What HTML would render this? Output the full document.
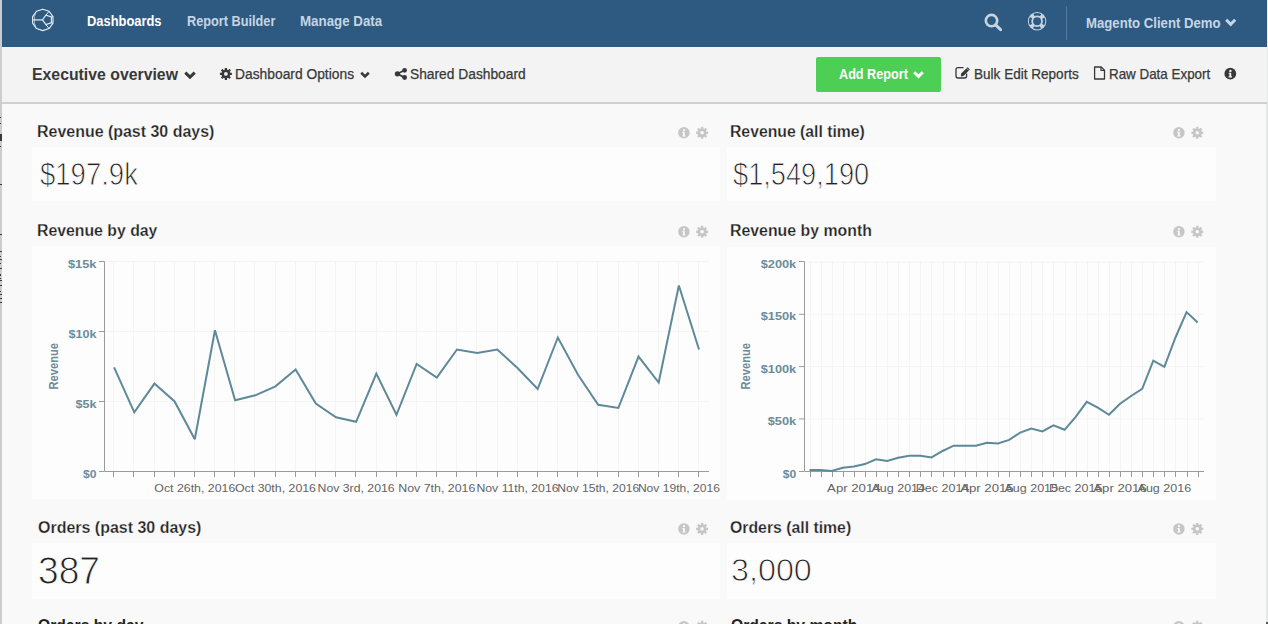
<!DOCTYPE html>
<html><head><meta charset="utf-8">
<style>
html,body{margin:0;padding:0}
body{width:1268px;height:624px;overflow:hidden;position:relative;background:#f9f9f9;font-family:"Liberation Sans",sans-serif}
.a{position:absolute}
.t{position:absolute;white-space:nowrap;font-family:"Liberation Sans",sans-serif;transform-origin:0 0}
svg{position:absolute;left:0;top:0}
svg text{font-family:"Liberation Sans",sans-serif}
</style></head>
<body>
<div class="a" style="left:0;top:0;width:2px;height:624px;background:#cdcdcd"></div>
<div class="a" style="left:1266px;top:47px;width:2px;height:577px;background:#e7e8e8"></div>
<div class="a" style="left:1267px;top:0;width:1px;height:47px;background:#e9eef0"></div>
<div class="a" style="left:0;top:117px;width:1px;height:1px;background:#3a3a3a"></div>
<div class="a" style="left:0;top:123px;width:1px;height:1px;background:#3a3a3a"></div>
<div class="a" style="left:0;top:134px;width:2px;height:7px;background:#3a3a3a"></div>
<div class="a" style="left:0;top:146px;width:1px;height:1px;background:#3a3a3a"></div>
<div class="a" style="left:0;top:183.5px;width:2px;height:1.2px;background:#3a3a3a"></div>
<div class="a" style="left:0;top:233.5px;width:2px;height:1.2px;background:#3a3a3a"></div>
<div class="a" style="left:0;top:251px;width:2px;height:1px;background:#3a3a3a"></div>
<div class="a" style="left:0;top:256px;width:1px;height:1px;background:#3a3a3a"></div>
<div class="a" style="left:0;top:259px;width:2px;height:1px;background:#3a3a3a"></div>
<div class="a" style="left:0;top:263px;width:1px;height:1px;background:#3a3a3a"></div>
<div class="a" style="left:0;top:268px;width:2px;height:1px;background:#3a3a3a"></div>
<div class="a" style="left:0;top:274px;width:1px;height:1.5px;background:#3a3a3a"></div>
<div class="a" style="left:0;top:278px;width:1px;height:1px;background:#3a3a3a"></div>
<div class="a" style="left:0;top:280px;width:2px;height:1px;background:#3a3a3a"></div>
<div class="a" style="left:0;top:285px;width:2px;height:1px;background:#3a3a3a"></div>
<div class="a" style="left:0;top:290.5px;width:1px;height:1px;background:#3a3a3a"></div>
<div class="a" style="left:0;top:294px;width:2px;height:1px;background:#3a3a3a"></div>
<div class="a" style="left:0;top:297.5px;width:2px;height:1px;background:#3a3a3a"></div>
<div class="a" style="left:0;top:302px;width:2px;height:1px;background:#3a3a3a"></div>
<div class="a" style="left:1266px;top:622px;width:2px;height:2px;background:#555"></div>
<div class="a" style="left:2px;top:0;width:1265px;height:47px;background:#2e5a82"></div>
<div class="a" style="left:1066px;top:6px;width:1px;height:34px;background:#52789b"></div>
<div class="a" style="left:2px;top:47px;width:1265px;height:55px;background:#f3f3f3"></div>
<div class="a" style="left:2px;top:102px;width:1265px;height:2px;background:#cfcfcf"></div>
<div class="a" style="left:816px;top:57px;width:125px;height:35px;background:#4dce55;border-radius:2px"></div>
<div class="a" style="left:32px;top:147px;width:688px;height:54px;background:#fdfdfd"></div>
<div class="a" style="left:727px;top:147px;width:489px;height:54px;background:#fdfdfd"></div>
<div class="a" style="left:32px;top:246px;width:688px;height:253px;background:#fdfdfd"></div>
<div class="a" style="left:727px;top:247px;width:489px;height:253px;background:#fdfdfd"></div>
<div class="a" style="left:32px;top:543px;width:688px;height:56px;background:#fdfdfd"></div>
<div class="a" style="left:727px;top:543px;width:489px;height:56px;background:#fdfdfd"></div>
<svg width="1268" height="624" viewBox="0 0 1268 624">
<line x1="113.5" y1="261" x2="113.5" y2="471" stroke="#f4f4f4" stroke-width="1"/>
<line x1="133.5" y1="261" x2="133.5" y2="471" stroke="#f4f4f4" stroke-width="1"/>
<line x1="154.5" y1="261" x2="154.5" y2="471" stroke="#f4f4f4" stroke-width="1"/>
<line x1="174.5" y1="261" x2="174.5" y2="471" stroke="#f4f4f4" stroke-width="1"/>
<line x1="194.5" y1="261" x2="194.5" y2="471" stroke="#f4f4f4" stroke-width="1"/>
<line x1="214.5" y1="261" x2="214.5" y2="471" stroke="#f4f4f4" stroke-width="1"/>
<line x1="234.5" y1="261" x2="234.5" y2="471" stroke="#f4f4f4" stroke-width="1"/>
<line x1="254.5" y1="261" x2="254.5" y2="471" stroke="#f4f4f4" stroke-width="1"/>
<line x1="275.5" y1="261" x2="275.5" y2="471" stroke="#f4f4f4" stroke-width="1"/>
<line x1="295.5" y1="261" x2="295.5" y2="471" stroke="#f4f4f4" stroke-width="1"/>
<line x1="315.5" y1="261" x2="315.5" y2="471" stroke="#f4f4f4" stroke-width="1"/>
<line x1="335.5" y1="261" x2="335.5" y2="471" stroke="#f4f4f4" stroke-width="1"/>
<line x1="355.5" y1="261" x2="355.5" y2="471" stroke="#f4f4f4" stroke-width="1"/>
<line x1="376.5" y1="261" x2="376.5" y2="471" stroke="#f4f4f4" stroke-width="1"/>
<line x1="396.5" y1="261" x2="396.5" y2="471" stroke="#f4f4f4" stroke-width="1"/>
<line x1="416.5" y1="261" x2="416.5" y2="471" stroke="#f4f4f4" stroke-width="1"/>
<line x1="436.5" y1="261" x2="436.5" y2="471" stroke="#f4f4f4" stroke-width="1"/>
<line x1="456.5" y1="261" x2="456.5" y2="471" stroke="#f4f4f4" stroke-width="1"/>
<line x1="476.5" y1="261" x2="476.5" y2="471" stroke="#f4f4f4" stroke-width="1"/>
<line x1="497.5" y1="261" x2="497.5" y2="471" stroke="#f4f4f4" stroke-width="1"/>
<line x1="517.5" y1="261" x2="517.5" y2="471" stroke="#f4f4f4" stroke-width="1"/>
<line x1="537.5" y1="261" x2="537.5" y2="471" stroke="#f4f4f4" stroke-width="1"/>
<line x1="557.5" y1="261" x2="557.5" y2="471" stroke="#f4f4f4" stroke-width="1"/>
<line x1="577.5" y1="261" x2="577.5" y2="471" stroke="#f4f4f4" stroke-width="1"/>
<line x1="597.5" y1="261" x2="597.5" y2="471" stroke="#f4f4f4" stroke-width="1"/>
<line x1="618.5" y1="261" x2="618.5" y2="471" stroke="#f4f4f4" stroke-width="1"/>
<line x1="638.5" y1="261" x2="638.5" y2="471" stroke="#f4f4f4" stroke-width="1"/>
<line x1="658.5" y1="261" x2="658.5" y2="471" stroke="#f4f4f4" stroke-width="1"/>
<line x1="678.5" y1="261" x2="678.5" y2="471" stroke="#f4f4f4" stroke-width="1"/>
<line x1="698.5" y1="261" x2="698.5" y2="471" stroke="#f4f4f4" stroke-width="1"/>
<line x1="104" y1="261.5" x2="709" y2="261.5" stroke="#f4f4f4" stroke-width="1"/>
<line x1="104" y1="331.5" x2="709" y2="331.5" stroke="#f4f4f4" stroke-width="1"/>
<line x1="104" y1="401.5" x2="709" y2="401.5" stroke="#f4f4f4" stroke-width="1"/>
<path d="M99,261.5 H104.5 V471.5 H709" fill="none" stroke="#9a9a9a" stroke-width="1"/>
<line x1="99" y1="331.5" x2="104" y2="331.5" stroke="#9a9a9a" stroke-width="1"/>
<line x1="99" y1="401.5" x2="104" y2="401.5" stroke="#9a9a9a" stroke-width="1"/>
<line x1="99" y1="471.5" x2="104" y2="471.5" stroke="#9a9a9a" stroke-width="1"/>
<line x1="113.5" y1="471" x2="113.5" y2="477" stroke="#9a9a9a" stroke-width="1"/>
<line x1="133.5" y1="471" x2="133.5" y2="477" stroke="#9a9a9a" stroke-width="1"/>
<line x1="154.5" y1="471" x2="154.5" y2="477" stroke="#9a9a9a" stroke-width="1"/>
<line x1="174.5" y1="471" x2="174.5" y2="477" stroke="#9a9a9a" stroke-width="1"/>
<line x1="194.5" y1="471" x2="194.5" y2="477" stroke="#9a9a9a" stroke-width="1"/>
<line x1="214.5" y1="471" x2="214.5" y2="477" stroke="#9a9a9a" stroke-width="1"/>
<line x1="234.5" y1="471" x2="234.5" y2="477" stroke="#9a9a9a" stroke-width="1"/>
<line x1="254.5" y1="471" x2="254.5" y2="477" stroke="#9a9a9a" stroke-width="1"/>
<line x1="275.5" y1="471" x2="275.5" y2="477" stroke="#9a9a9a" stroke-width="1"/>
<line x1="295.5" y1="471" x2="295.5" y2="477" stroke="#9a9a9a" stroke-width="1"/>
<line x1="315.5" y1="471" x2="315.5" y2="477" stroke="#9a9a9a" stroke-width="1"/>
<line x1="335.5" y1="471" x2="335.5" y2="477" stroke="#9a9a9a" stroke-width="1"/>
<line x1="355.5" y1="471" x2="355.5" y2="477" stroke="#9a9a9a" stroke-width="1"/>
<line x1="376.5" y1="471" x2="376.5" y2="477" stroke="#9a9a9a" stroke-width="1"/>
<line x1="396.5" y1="471" x2="396.5" y2="477" stroke="#9a9a9a" stroke-width="1"/>
<line x1="416.5" y1="471" x2="416.5" y2="477" stroke="#9a9a9a" stroke-width="1"/>
<line x1="436.5" y1="471" x2="436.5" y2="477" stroke="#9a9a9a" stroke-width="1"/>
<line x1="456.5" y1="471" x2="456.5" y2="477" stroke="#9a9a9a" stroke-width="1"/>
<line x1="476.5" y1="471" x2="476.5" y2="477" stroke="#9a9a9a" stroke-width="1"/>
<line x1="497.5" y1="471" x2="497.5" y2="477" stroke="#9a9a9a" stroke-width="1"/>
<line x1="517.5" y1="471" x2="517.5" y2="477" stroke="#9a9a9a" stroke-width="1"/>
<line x1="537.5" y1="471" x2="537.5" y2="477" stroke="#9a9a9a" stroke-width="1"/>
<line x1="557.5" y1="471" x2="557.5" y2="477" stroke="#9a9a9a" stroke-width="1"/>
<line x1="577.5" y1="471" x2="577.5" y2="477" stroke="#9a9a9a" stroke-width="1"/>
<line x1="597.5" y1="471" x2="597.5" y2="477" stroke="#9a9a9a" stroke-width="1"/>
<line x1="618.5" y1="471" x2="618.5" y2="477" stroke="#9a9a9a" stroke-width="1"/>
<line x1="638.5" y1="471" x2="638.5" y2="477" stroke="#9a9a9a" stroke-width="1"/>
<line x1="658.5" y1="471" x2="658.5" y2="477" stroke="#9a9a9a" stroke-width="1"/>
<line x1="678.5" y1="471" x2="678.5" y2="477" stroke="#9a9a9a" stroke-width="1"/>
<line x1="698.5" y1="471" x2="698.5" y2="477" stroke="#9a9a9a" stroke-width="1"/>
<text x="96.5" y="267.5" text-anchor="end" font-size="11.5" font-weight="bold" fill="#6a8c9b" textLength="28.5" lengthAdjust="spacingAndGlyphs">$15k</text>
<text x="96.5" y="337.5" text-anchor="end" font-size="11.5" font-weight="bold" fill="#6a8c9b" textLength="28" lengthAdjust="spacingAndGlyphs">$10k</text>
<text x="96.5" y="407.5" text-anchor="end" font-size="11.5" font-weight="bold" fill="#6a8c9b" textLength="21" lengthAdjust="spacingAndGlyphs">$5k</text>
<text x="96.5" y="477.5" text-anchor="end" font-size="11.5" font-weight="bold" fill="#6a8c9b" textLength="13.5" lengthAdjust="spacingAndGlyphs">$0</text>
<text x="154.3" y="491.7" font-size="11" fill="#646464" textLength="81" lengthAdjust="spacingAndGlyphs">Oct 26th, 2016</text>
<text x="235.0" y="491.7" font-size="11" fill="#646464" textLength="81" lengthAdjust="spacingAndGlyphs">Oct 30th, 2016</text>
<text x="317.6" y="491.7" font-size="11" fill="#646464" textLength="77" lengthAdjust="spacingAndGlyphs">Nov 3rd, 2016</text>
<text x="398.3" y="491.7" font-size="11" fill="#646464" textLength="77" lengthAdjust="spacingAndGlyphs">Nov 7th, 2016</text>
<text x="476.5" y="491.7" font-size="11" fill="#646464" textLength="82" lengthAdjust="spacingAndGlyphs">Nov 11th, 2016</text>
<text x="557.2" y="491.7" font-size="11" fill="#646464" textLength="82" lengthAdjust="spacingAndGlyphs">Nov 15th, 2016</text>
<text x="637.9" y="491.7" font-size="11" fill="#646464" textLength="82" lengthAdjust="spacingAndGlyphs">Nov 19th, 2016</text>
<text x="0" y="0" transform="translate(57.6,366.2) rotate(-90)" text-anchor="middle" font-size="12.5" font-weight="bold" fill="#6a8c9b" textLength="46.5" lengthAdjust="spacingAndGlyphs">Revenue</text>
<polyline points="114.10,367.40 134.27,412.30 154.44,383.60 174.61,401.50 194.78,439.20 214.95,330.30 235.12,400.20 255.29,395.30 275.46,386.30 295.63,369.50 315.80,403.60 335.97,417.30 356.14,421.80 376.31,373.60 396.48,414.80 416.65,364.00 436.82,377.60 456.99,349.50 477.16,353.00 497.33,349.50 517.50,368.00 537.67,389.00 557.84,337.50 578.01,374.80 598.18,404.80 618.35,408.00 638.52,356.60 658.69,382.50 678.86,285.50 699.03,349.50" fill="none" stroke="#5e8999" stroke-width="2.0" stroke-linejoin="miter" stroke-miterlimit="3"/>
<line x1="810.5" y1="261" x2="810.5" y2="471" stroke="#f4f4f4" stroke-width="1"/>
<line x1="821.5" y1="261" x2="821.5" y2="471" stroke="#f4f4f4" stroke-width="1"/>
<line x1="832.5" y1="261" x2="832.5" y2="471" stroke="#f4f4f4" stroke-width="1"/>
<line x1="843.5" y1="261" x2="843.5" y2="471" stroke="#f4f4f4" stroke-width="1"/>
<line x1="854.5" y1="261" x2="854.5" y2="471" stroke="#f4f4f4" stroke-width="1"/>
<line x1="865.5" y1="261" x2="865.5" y2="471" stroke="#f4f4f4" stroke-width="1"/>
<line x1="876.5" y1="261" x2="876.5" y2="471" stroke="#f4f4f4" stroke-width="1"/>
<line x1="887.5" y1="261" x2="887.5" y2="471" stroke="#f4f4f4" stroke-width="1"/>
<line x1="898.5" y1="261" x2="898.5" y2="471" stroke="#f4f4f4" stroke-width="1"/>
<line x1="909.5" y1="261" x2="909.5" y2="471" stroke="#f4f4f4" stroke-width="1"/>
<line x1="920.5" y1="261" x2="920.5" y2="471" stroke="#f4f4f4" stroke-width="1"/>
<line x1="931.5" y1="261" x2="931.5" y2="471" stroke="#f4f4f4" stroke-width="1"/>
<line x1="943.5" y1="261" x2="943.5" y2="471" stroke="#f4f4f4" stroke-width="1"/>
<line x1="954.5" y1="261" x2="954.5" y2="471" stroke="#f4f4f4" stroke-width="1"/>
<line x1="965.5" y1="261" x2="965.5" y2="471" stroke="#f4f4f4" stroke-width="1"/>
<line x1="976.5" y1="261" x2="976.5" y2="471" stroke="#f4f4f4" stroke-width="1"/>
<line x1="987.5" y1="261" x2="987.5" y2="471" stroke="#f4f4f4" stroke-width="1"/>
<line x1="998.5" y1="261" x2="998.5" y2="471" stroke="#f4f4f4" stroke-width="1"/>
<line x1="1009.5" y1="261" x2="1009.5" y2="471" stroke="#f4f4f4" stroke-width="1"/>
<line x1="1020.5" y1="261" x2="1020.5" y2="471" stroke="#f4f4f4" stroke-width="1"/>
<line x1="1031.5" y1="261" x2="1031.5" y2="471" stroke="#f4f4f4" stroke-width="1"/>
<line x1="1042.5" y1="261" x2="1042.5" y2="471" stroke="#f4f4f4" stroke-width="1"/>
<line x1="1053.5" y1="261" x2="1053.5" y2="471" stroke="#f4f4f4" stroke-width="1"/>
<line x1="1065.5" y1="261" x2="1065.5" y2="471" stroke="#f4f4f4" stroke-width="1"/>
<line x1="1076.5" y1="261" x2="1076.5" y2="471" stroke="#f4f4f4" stroke-width="1"/>
<line x1="1087.5" y1="261" x2="1087.5" y2="471" stroke="#f4f4f4" stroke-width="1"/>
<line x1="1098.5" y1="261" x2="1098.5" y2="471" stroke="#f4f4f4" stroke-width="1"/>
<line x1="1109.5" y1="261" x2="1109.5" y2="471" stroke="#f4f4f4" stroke-width="1"/>
<line x1="1120.5" y1="261" x2="1120.5" y2="471" stroke="#f4f4f4" stroke-width="1"/>
<line x1="1131.5" y1="261" x2="1131.5" y2="471" stroke="#f4f4f4" stroke-width="1"/>
<line x1="1142.5" y1="261" x2="1142.5" y2="471" stroke="#f4f4f4" stroke-width="1"/>
<line x1="1153.5" y1="261" x2="1153.5" y2="471" stroke="#f4f4f4" stroke-width="1"/>
<line x1="1164.5" y1="261" x2="1164.5" y2="471" stroke="#f4f4f4" stroke-width="1"/>
<line x1="1175.5" y1="261" x2="1175.5" y2="471" stroke="#f4f4f4" stroke-width="1"/>
<line x1="1187.5" y1="261" x2="1187.5" y2="471" stroke="#f4f4f4" stroke-width="1"/>
<line x1="1198.5" y1="261" x2="1198.5" y2="471" stroke="#f4f4f4" stroke-width="1"/>
<line x1="804" y1="262.0" x2="1204" y2="262.0" stroke="#f4f4f4" stroke-width="1"/>
<line x1="804" y1="314.3" x2="1204" y2="314.3" stroke="#f4f4f4" stroke-width="1"/>
<line x1="804" y1="366.6" x2="1204" y2="366.6" stroke="#f4f4f4" stroke-width="1"/>
<line x1="804" y1="418.9" x2="1204" y2="418.9" stroke="#f4f4f4" stroke-width="1"/>
<path d="M799,261.5 H804.5 V471.5 H1204" fill="none" stroke="#9a9a9a" stroke-width="1"/>
<line x1="799" y1="314.3" x2="804" y2="314.3" stroke="#9a9a9a" stroke-width="1"/>
<line x1="799" y1="366.6" x2="804" y2="366.6" stroke="#9a9a9a" stroke-width="1"/>
<line x1="799" y1="418.9" x2="804" y2="418.9" stroke="#9a9a9a" stroke-width="1"/>
<line x1="799" y1="471.5" x2="804" y2="471.5" stroke="#9a9a9a" stroke-width="1"/>
<line x1="810.5" y1="471" x2="810.5" y2="477" stroke="#9a9a9a" stroke-width="1"/>
<line x1="821.5" y1="471" x2="821.5" y2="477" stroke="#9a9a9a" stroke-width="1"/>
<line x1="832.5" y1="471" x2="832.5" y2="477" stroke="#9a9a9a" stroke-width="1"/>
<line x1="843.5" y1="471" x2="843.5" y2="477" stroke="#9a9a9a" stroke-width="1"/>
<line x1="854.5" y1="471" x2="854.5" y2="477" stroke="#9a9a9a" stroke-width="1"/>
<line x1="865.5" y1="471" x2="865.5" y2="477" stroke="#9a9a9a" stroke-width="1"/>
<line x1="876.5" y1="471" x2="876.5" y2="477" stroke="#9a9a9a" stroke-width="1"/>
<line x1="887.5" y1="471" x2="887.5" y2="477" stroke="#9a9a9a" stroke-width="1"/>
<line x1="898.5" y1="471" x2="898.5" y2="477" stroke="#9a9a9a" stroke-width="1"/>
<line x1="909.5" y1="471" x2="909.5" y2="477" stroke="#9a9a9a" stroke-width="1"/>
<line x1="920.5" y1="471" x2="920.5" y2="477" stroke="#9a9a9a" stroke-width="1"/>
<line x1="931.5" y1="471" x2="931.5" y2="477" stroke="#9a9a9a" stroke-width="1"/>
<line x1="943.5" y1="471" x2="943.5" y2="477" stroke="#9a9a9a" stroke-width="1"/>
<line x1="954.5" y1="471" x2="954.5" y2="477" stroke="#9a9a9a" stroke-width="1"/>
<line x1="965.5" y1="471" x2="965.5" y2="477" stroke="#9a9a9a" stroke-width="1"/>
<line x1="976.5" y1="471" x2="976.5" y2="477" stroke="#9a9a9a" stroke-width="1"/>
<line x1="987.5" y1="471" x2="987.5" y2="477" stroke="#9a9a9a" stroke-width="1"/>
<line x1="998.5" y1="471" x2="998.5" y2="477" stroke="#9a9a9a" stroke-width="1"/>
<line x1="1009.5" y1="471" x2="1009.5" y2="477" stroke="#9a9a9a" stroke-width="1"/>
<line x1="1020.5" y1="471" x2="1020.5" y2="477" stroke="#9a9a9a" stroke-width="1"/>
<line x1="1031.5" y1="471" x2="1031.5" y2="477" stroke="#9a9a9a" stroke-width="1"/>
<line x1="1042.5" y1="471" x2="1042.5" y2="477" stroke="#9a9a9a" stroke-width="1"/>
<line x1="1053.5" y1="471" x2="1053.5" y2="477" stroke="#9a9a9a" stroke-width="1"/>
<line x1="1065.5" y1="471" x2="1065.5" y2="477" stroke="#9a9a9a" stroke-width="1"/>
<line x1="1076.5" y1="471" x2="1076.5" y2="477" stroke="#9a9a9a" stroke-width="1"/>
<line x1="1087.5" y1="471" x2="1087.5" y2="477" stroke="#9a9a9a" stroke-width="1"/>
<line x1="1098.5" y1="471" x2="1098.5" y2="477" stroke="#9a9a9a" stroke-width="1"/>
<line x1="1109.5" y1="471" x2="1109.5" y2="477" stroke="#9a9a9a" stroke-width="1"/>
<line x1="1120.5" y1="471" x2="1120.5" y2="477" stroke="#9a9a9a" stroke-width="1"/>
<line x1="1131.5" y1="471" x2="1131.5" y2="477" stroke="#9a9a9a" stroke-width="1"/>
<line x1="1142.5" y1="471" x2="1142.5" y2="477" stroke="#9a9a9a" stroke-width="1"/>
<line x1="1153.5" y1="471" x2="1153.5" y2="477" stroke="#9a9a9a" stroke-width="1"/>
<line x1="1164.5" y1="471" x2="1164.5" y2="477" stroke="#9a9a9a" stroke-width="1"/>
<line x1="1175.5" y1="471" x2="1175.5" y2="477" stroke="#9a9a9a" stroke-width="1"/>
<line x1="1187.5" y1="471" x2="1187.5" y2="477" stroke="#9a9a9a" stroke-width="1"/>
<line x1="1198.5" y1="471" x2="1198.5" y2="477" stroke="#9a9a9a" stroke-width="1"/>
<text x="796.2" y="268.0" text-anchor="end" font-size="11.5" font-weight="bold" fill="#6a8c9b" textLength="35.5" lengthAdjust="spacingAndGlyphs">$200k</text>
<text x="796.2" y="320.3" text-anchor="end" font-size="11.5" font-weight="bold" fill="#6a8c9b" textLength="35.5" lengthAdjust="spacingAndGlyphs">$150k</text>
<text x="796.2" y="372.6" text-anchor="end" font-size="11.5" font-weight="bold" fill="#6a8c9b" textLength="35.5" lengthAdjust="spacingAndGlyphs">$100k</text>
<text x="796.2" y="424.9" text-anchor="end" font-size="11.5" font-weight="bold" fill="#6a8c9b" textLength="28.5" lengthAdjust="spacingAndGlyphs">$50k</text>
<text x="796.2" y="477.5" text-anchor="end" font-size="11.5" font-weight="bold" fill="#6a8c9b" textLength="13.5" lengthAdjust="spacingAndGlyphs">$0</text>
<text x="827.1" y="491.7" font-size="11" fill="#646464" textLength="53.5" lengthAdjust="spacingAndGlyphs">Apr 2014</text>
<text x="871.5" y="491.7" font-size="11" fill="#646464" textLength="53.5" lengthAdjust="spacingAndGlyphs">Aug 2014</text>
<text x="915.8" y="491.7" font-size="11" fill="#646464" textLength="53.5" lengthAdjust="spacingAndGlyphs">Dec 2014</text>
<text x="960.2" y="491.7" font-size="11" fill="#646464" textLength="53.5" lengthAdjust="spacingAndGlyphs">Apr 2015</text>
<text x="1004.5" y="491.7" font-size="11" fill="#646464" textLength="53.5" lengthAdjust="spacingAndGlyphs">Aug 2015</text>
<text x="1048.9" y="491.7" font-size="11" fill="#646464" textLength="53.5" lengthAdjust="spacingAndGlyphs">Dec 2015</text>
<text x="1093.3" y="491.7" font-size="11" fill="#646464" textLength="53.5" lengthAdjust="spacingAndGlyphs">Apr 2016</text>
<text x="1137.6" y="491.7" font-size="11" fill="#646464" textLength="53.5" lengthAdjust="spacingAndGlyphs">Aug 2016</text>
<text x="0" y="0" transform="translate(750.4,366.2) rotate(-90)" text-anchor="middle" font-size="12.5" font-weight="bold" fill="#6a8c9b" textLength="46.5" lengthAdjust="spacingAndGlyphs">Revenue</text>
<polyline points="809.50,470.10 820.59,470.10 831.68,471.00 842.77,467.80 853.86,466.50 864.95,464.10 876.04,459.30 887.13,460.90 898.22,457.70 909.31,455.80 920.40,455.80 931.49,457.40 942.58,451.00 953.67,445.70 964.76,445.70 975.85,445.70 986.94,442.80 998.03,443.40 1009.12,439.90 1020.21,432.60 1031.30,428.60 1042.39,431.50 1053.48,425.40 1064.57,429.80 1075.66,416.80 1086.75,401.80 1097.84,407.60 1108.93,414.80 1120.02,403.80 1131.11,396.00 1142.20,388.80 1153.29,360.60 1164.38,366.90 1175.47,337.50 1186.56,312.10 1197.65,322.50" fill="none" stroke="#5e8999" stroke-width="2.0" stroke-linejoin="miter" stroke-miterlimit="3"/>
<polygon points="42.80,9.20 49.09,11.24 52.98,16.59 52.98,23.21 49.09,28.56 42.80,30.60 36.51,28.56 32.62,23.21 32.62,16.59 36.51,11.24" fill="none" stroke="#e6eef5" stroke-width="1.15" stroke-linejoin="round"/>
<polygon points="42.50,19.90 45.89,15.24 51.36,17.02 51.36,22.78 45.89,24.56" fill="none" stroke="#e6eef5" stroke-width="1.1"/>
<line x1="33.13" y1="19.9" x2="42.50" y2="19.9" stroke="#e6eef5" stroke-width="1.2"/>
<line x1="45.89" y1="15.24" x2="49.09" y2="11.24" stroke="#e6eef5" stroke-width="1"/>
<line x1="51.36" y1="17.02" x2="52.98" y2="16.59" stroke="#e6eef5" stroke-width="1"/>
<line x1="51.36" y1="22.78" x2="52.98" y2="23.21" stroke="#e6eef5" stroke-width="1"/>
<line x1="45.89" y1="24.56" x2="49.09" y2="28.56" stroke="#e6eef5" stroke-width="1"/>
<path d="M35.6,13.4 L34.4,16.6 L34.4,23.2 L35.6,26.4" fill="none" stroke="#e6eef5" stroke-width="0.8" opacity="0.8"/>
<circle cx="991.5" cy="20.6" r="5.7" fill="none" stroke="#c6d5e3" stroke-width="2.6"/>
<line x1="995.6" y1="24.9" x2="1000.6" y2="29.6" stroke="#c6d5e3" stroke-width="3" stroke-linecap="round"/>
<circle cx="1037.1" cy="21.2" r="6.6" fill="none" stroke="#c6d5e3" stroke-width="5.3"/>
<circle cx="1037.1" cy="21.2" r="7.0" fill="none" stroke="#2e5a82" stroke-width="2.5" stroke-dasharray="7.09 3.91" stroke-dashoffset="3.54"/>
<polyline points="1226.2,19.8 1230.7,24.3 1235.2,19.8" fill="none" stroke="#c6d5e3" stroke-width="3"/>
<polyline points="185.3,72.7 190,77.1 194.7,72.7" fill="none" stroke="#383838" stroke-width="3"/>
<polyline points="361.2,72.8 365,76.4 368.8,72.8" fill="none" stroke="#383838" stroke-width="2.6"/>
<polyline points="914.2,72.3 918.5,76.4 922.8,72.3" fill="none" stroke="#ffffff" stroke-width="2.9"/>
<path d="M229.97,72.22 L230.17,72.83 L231.88,72.71 L231.88,75.09 L230.17,74.97 L229.97,75.58 L229.67,76.16 L230.97,77.29 L229.29,78.97 L228.16,77.67 L227.58,77.97 L226.97,78.17 L227.09,79.88 L224.71,79.88 L224.83,78.17 L224.22,77.97 L223.64,77.67 L222.51,78.97 L220.83,77.29 L222.13,76.16 L221.83,75.58 L221.63,74.97 L219.92,75.09 L219.92,72.71 L221.63,72.83 L221.83,72.22 L222.13,71.64 L220.83,70.51 L222.51,68.83 L223.64,70.13 L224.22,69.83 L224.83,69.63 L224.71,67.92 L227.09,67.92 L226.97,69.63 L227.58,69.83 L228.16,70.13 L229.29,68.83 L230.97,70.51 L229.67,71.64 Z M227.80,73.90 A1.9,1.9 0 1 0 224.00,73.90 A1.9,1.9 0 1 0 227.80,73.90 Z" fill="#383838" fill-rule="evenodd"/>
<path d="M397.4,73.8 L404.6,70.2 M397.4,73.8 L404.6,77.6" stroke="#383838" stroke-width="1.8"/>
<circle cx="397.4" cy="73.8" r="2.6" fill="#383838"/><circle cx="404.6" cy="70.3" r="2.4" fill="#383838"/><circle cx="404.6" cy="77.5" r="2.4" fill="#383838"/>
<path d="M963.5,67.6 H958 Q956,67.6 956,69.6 V76 Q956,78 958,78 H964.6 Q966.6,78 966.6,76 V73.5" fill="none" stroke="#383838" stroke-width="1.3"/>
<path d="M961.2,73.6 L967.6,67.2 L969.9,69.5 L963.5,75.9 L960.8,76.6 Z" fill="#383838"/>
<line x1="966.6" y1="68.2" x2="968.9" y2="70.5" stroke="#f3f3f3" stroke-width="0.6"/>
<path d="M1094.6,67 H1101.2 L1104.5,70.3 V79 H1094.6 Z" fill="none" stroke="#383838" stroke-width="1.3" stroke-linejoin="round"/>
<path d="M1101,67.2 V70.5 H1104.3" fill="none" stroke="#383838" stroke-width="1.2"/>
<circle cx="1230.3" cy="73.7" r="5.9" fill="#383838"/><circle cx="1230.40" cy="70.93" r="1.18" fill="#f3f3f3"/><path d="M1228.66,72.67 H1231.22 V76.37 H1232.04 V77.50 H1228.56 V76.37 H1229.38 V73.80 H1228.66 Z" fill="#f3f3f3"/>
<circle cx="683.9" cy="132.8" r="5.75" fill="#c6c6c6"/><circle cx="684.00" cy="130.10" r="1.15" fill="#f9f9f9"/><path d="M682.30,131.80 H684.80 V135.40 H685.60 V136.50 H682.20 V135.40 H683.00 V132.90 H682.30 Z" fill="#f9f9f9"/>
<path d="M706.26,131.08 L706.47,131.71 L708.08,131.61 L708.08,133.99 L706.47,133.89 L706.26,134.52 L705.96,135.11 L707.17,136.19 L705.49,137.87 L704.41,136.66 L703.82,136.96 L703.19,137.17 L703.29,138.78 L700.91,138.78 L701.01,137.17 L700.38,136.96 L699.79,136.66 L698.71,137.87 L697.03,136.19 L698.24,135.11 L697.94,134.52 L697.73,133.89 L696.12,133.99 L696.12,131.61 L697.73,131.71 L697.94,131.08 L698.24,130.49 L697.03,129.41 L698.71,127.73 L699.79,128.94 L700.38,128.64 L701.01,128.43 L700.91,126.82 L703.29,126.82 L703.19,128.43 L703.82,128.64 L704.41,128.94 L705.49,127.73 L707.17,129.41 L705.96,130.49 Z M703.90,132.80 A1.8,1.8 0 1 0 700.30,132.80 A1.8,1.8 0 1 0 703.90,132.80 Z" fill="#c6c6c6" fill-rule="evenodd"/>
<circle cx="1178.9" cy="132.8" r="5.75" fill="#c6c6c6"/><circle cx="1179.00" cy="130.10" r="1.15" fill="#f9f9f9"/><path d="M1177.30,131.80 H1179.80 V135.40 H1180.60 V136.50 H1177.20 V135.40 H1178.00 V132.90 H1177.30 Z" fill="#f9f9f9"/>
<path d="M1201.46,131.08 L1201.67,131.71 L1203.28,131.61 L1203.28,133.99 L1201.67,133.89 L1201.46,134.52 L1201.16,135.11 L1202.37,136.19 L1200.69,137.87 L1199.61,136.66 L1199.02,136.96 L1198.39,137.17 L1198.49,138.78 L1196.11,138.78 L1196.21,137.17 L1195.58,136.96 L1194.99,136.66 L1193.91,137.87 L1192.23,136.19 L1193.44,135.11 L1193.14,134.52 L1192.93,133.89 L1191.32,133.99 L1191.32,131.61 L1192.93,131.71 L1193.14,131.08 L1193.44,130.49 L1192.23,129.41 L1193.91,127.73 L1194.99,128.94 L1195.58,128.64 L1196.21,128.43 L1196.11,126.82 L1198.49,126.82 L1198.39,128.43 L1199.02,128.64 L1199.61,128.94 L1200.69,127.73 L1202.37,129.41 L1201.16,130.49 Z M1199.10,132.80 A1.8,1.8 0 1 0 1195.50,132.80 A1.8,1.8 0 1 0 1199.10,132.80 Z" fill="#c6c6c6" fill-rule="evenodd"/>
<circle cx="683.9" cy="231.8" r="5.75" fill="#c6c6c6"/><circle cx="684.00" cy="229.10" r="1.15" fill="#f9f9f9"/><path d="M682.30,230.80 H684.80 V234.40 H685.60 V235.50 H682.20 V234.40 H683.00 V231.90 H682.30 Z" fill="#f9f9f9"/>
<path d="M706.26,230.08 L706.47,230.71 L708.08,230.61 L708.08,232.99 L706.47,232.89 L706.26,233.52 L705.96,234.11 L707.17,235.19 L705.49,236.87 L704.41,235.66 L703.82,235.96 L703.19,236.17 L703.29,237.78 L700.91,237.78 L701.01,236.17 L700.38,235.96 L699.79,235.66 L698.71,236.87 L697.03,235.19 L698.24,234.11 L697.94,233.52 L697.73,232.89 L696.12,232.99 L696.12,230.61 L697.73,230.71 L697.94,230.08 L698.24,229.49 L697.03,228.41 L698.71,226.73 L699.79,227.94 L700.38,227.64 L701.01,227.43 L700.91,225.82 L703.29,225.82 L703.19,227.43 L703.82,227.64 L704.41,227.94 L705.49,226.73 L707.17,228.41 L705.96,229.49 Z M703.90,231.80 A1.8,1.8 0 1 0 700.30,231.80 A1.8,1.8 0 1 0 703.90,231.80 Z" fill="#c6c6c6" fill-rule="evenodd"/>
<circle cx="1178.9" cy="231.8" r="5.75" fill="#c6c6c6"/><circle cx="1179.00" cy="229.10" r="1.15" fill="#f9f9f9"/><path d="M1177.30,230.80 H1179.80 V234.40 H1180.60 V235.50 H1177.20 V234.40 H1178.00 V231.90 H1177.30 Z" fill="#f9f9f9"/>
<path d="M1201.46,230.08 L1201.67,230.71 L1203.28,230.61 L1203.28,232.99 L1201.67,232.89 L1201.46,233.52 L1201.16,234.11 L1202.37,235.19 L1200.69,236.87 L1199.61,235.66 L1199.02,235.96 L1198.39,236.17 L1198.49,237.78 L1196.11,237.78 L1196.21,236.17 L1195.58,235.96 L1194.99,235.66 L1193.91,236.87 L1192.23,235.19 L1193.44,234.11 L1193.14,233.52 L1192.93,232.89 L1191.32,232.99 L1191.32,230.61 L1192.93,230.71 L1193.14,230.08 L1193.44,229.49 L1192.23,228.41 L1193.91,226.73 L1194.99,227.94 L1195.58,227.64 L1196.21,227.43 L1196.11,225.82 L1198.49,225.82 L1198.39,227.43 L1199.02,227.64 L1199.61,227.94 L1200.69,226.73 L1202.37,228.41 L1201.16,229.49 Z M1199.10,231.80 A1.8,1.8 0 1 0 1195.50,231.80 A1.8,1.8 0 1 0 1199.10,231.80 Z" fill="#c6c6c6" fill-rule="evenodd"/>
<circle cx="683.9" cy="528.9" r="5.75" fill="#c6c6c6"/><circle cx="684.00" cy="526.20" r="1.15" fill="#f9f9f9"/><path d="M682.30,527.90 H684.80 V531.50 H685.60 V532.60 H682.20 V531.50 H683.00 V529.00 H682.30 Z" fill="#f9f9f9"/>
<path d="M706.26,527.18 L706.47,527.81 L708.08,527.71 L708.08,530.09 L706.47,529.99 L706.26,530.62 L705.96,531.21 L707.17,532.29 L705.49,533.97 L704.41,532.76 L703.82,533.06 L703.19,533.27 L703.29,534.88 L700.91,534.88 L701.01,533.27 L700.38,533.06 L699.79,532.76 L698.71,533.97 L697.03,532.29 L698.24,531.21 L697.94,530.62 L697.73,529.99 L696.12,530.09 L696.12,527.71 L697.73,527.81 L697.94,527.18 L698.24,526.59 L697.03,525.51 L698.71,523.83 L699.79,525.04 L700.38,524.74 L701.01,524.53 L700.91,522.92 L703.29,522.92 L703.19,524.53 L703.82,524.74 L704.41,525.04 L705.49,523.83 L707.17,525.51 L705.96,526.59 Z M703.90,528.90 A1.8,1.8 0 1 0 700.30,528.90 A1.8,1.8 0 1 0 703.90,528.90 Z" fill="#c6c6c6" fill-rule="evenodd"/>
<circle cx="1178.9" cy="528.9" r="5.75" fill="#c6c6c6"/><circle cx="1179.00" cy="526.20" r="1.15" fill="#f9f9f9"/><path d="M1177.30,527.90 H1179.80 V531.50 H1180.60 V532.60 H1177.20 V531.50 H1178.00 V529.00 H1177.30 Z" fill="#f9f9f9"/>
<path d="M1201.46,527.18 L1201.67,527.81 L1203.28,527.71 L1203.28,530.09 L1201.67,529.99 L1201.46,530.62 L1201.16,531.21 L1202.37,532.29 L1200.69,533.97 L1199.61,532.76 L1199.02,533.06 L1198.39,533.27 L1198.49,534.88 L1196.11,534.88 L1196.21,533.27 L1195.58,533.06 L1194.99,532.76 L1193.91,533.97 L1192.23,532.29 L1193.44,531.21 L1193.14,530.62 L1192.93,529.99 L1191.32,530.09 L1191.32,527.71 L1192.93,527.81 L1193.14,527.18 L1193.44,526.59 L1192.23,525.51 L1193.91,523.83 L1194.99,525.04 L1195.58,524.74 L1196.21,524.53 L1196.11,522.92 L1198.49,522.92 L1198.39,524.53 L1199.02,524.74 L1199.61,525.04 L1200.69,523.83 L1202.37,525.51 L1201.16,526.59 Z M1199.10,528.90 A1.8,1.8 0 1 0 1195.50,528.90 A1.8,1.8 0 1 0 1199.10,528.90 Z" fill="#c6c6c6" fill-rule="evenodd"/>
<circle cx="683.9" cy="626.8" r="5.75" fill="#c6c6c6"/><circle cx="684.00" cy="624.10" r="1.15" fill="#f9f9f9"/><path d="M682.30,625.80 H684.80 V629.40 H685.60 V630.50 H682.20 V629.40 H683.00 V626.90 H682.30 Z" fill="#f9f9f9"/>
<path d="M706.26,625.08 L706.47,625.71 L708.08,625.61 L708.08,627.99 L706.47,627.89 L706.26,628.52 L705.96,629.11 L707.17,630.19 L705.49,631.87 L704.41,630.66 L703.82,630.96 L703.19,631.17 L703.29,632.78 L700.91,632.78 L701.01,631.17 L700.38,630.96 L699.79,630.66 L698.71,631.87 L697.03,630.19 L698.24,629.11 L697.94,628.52 L697.73,627.89 L696.12,627.99 L696.12,625.61 L697.73,625.71 L697.94,625.08 L698.24,624.49 L697.03,623.41 L698.71,621.73 L699.79,622.94 L700.38,622.64 L701.01,622.43 L700.91,620.82 L703.29,620.82 L703.19,622.43 L703.82,622.64 L704.41,622.94 L705.49,621.73 L707.17,623.41 L705.96,624.49 Z M703.90,626.80 A1.8,1.8 0 1 0 700.30,626.80 A1.8,1.8 0 1 0 703.90,626.80 Z" fill="#c6c6c6" fill-rule="evenodd"/>
<circle cx="1178.9" cy="626.8" r="5.75" fill="#c6c6c6"/><circle cx="1179.00" cy="624.10" r="1.15" fill="#f9f9f9"/><path d="M1177.30,625.80 H1179.80 V629.40 H1180.60 V630.50 H1177.20 V629.40 H1178.00 V626.90 H1177.30 Z" fill="#f9f9f9"/>
<path d="M1201.46,625.08 L1201.67,625.71 L1203.28,625.61 L1203.28,627.99 L1201.67,627.89 L1201.46,628.52 L1201.16,629.11 L1202.37,630.19 L1200.69,631.87 L1199.61,630.66 L1199.02,630.96 L1198.39,631.17 L1198.49,632.78 L1196.11,632.78 L1196.21,631.17 L1195.58,630.96 L1194.99,630.66 L1193.91,631.87 L1192.23,630.19 L1193.44,629.11 L1193.14,628.52 L1192.93,627.89 L1191.32,627.99 L1191.32,625.61 L1192.93,625.71 L1193.14,625.08 L1193.44,624.49 L1192.23,623.41 L1193.91,621.73 L1194.99,622.94 L1195.58,622.64 L1196.21,622.43 L1196.11,620.82 L1198.49,620.82 L1198.39,622.43 L1199.02,622.64 L1199.61,622.94 L1200.69,621.73 L1202.37,623.41 L1201.16,624.49 Z M1199.10,626.80 A1.8,1.8 0 1 0 1195.50,626.80 A1.8,1.8 0 1 0 1199.10,626.80 Z" fill="#c6c6c6" fill-rule="evenodd"/>
</svg>
<div class="t" style="left:86.5px;top:14.0px;font-size:14.25px;line-height:14.25px;font-weight:700;color:#ffffff;transform:scaleX(0.9049)">Dashboards</div>
<div class="t" style="left:186.9px;top:14.0px;font-size:14.25px;line-height:14.25px;font-weight:700;color:#c6d5e3;transform:scaleX(0.8929)">Report Builder</div>
<div class="t" style="left:299.8px;top:14.0px;font-size:14.25px;line-height:14.25px;font-weight:700;color:#c6d5e3;transform:scaleX(0.9345)">Manage Data</div>
<div class="t" style="left:1085.5px;top:15.5px;font-size:14.5px;line-height:14.5px;font-weight:700;color:#c6d5e3;transform:scaleX(0.9082)">Magento Client Demo</div>
<div class="t" style="left:31.6px;top:66.7px;font-size:15.75px;line-height:15.75px;font-weight:700;color:#383838;transform:scaleX(1.0042)">Executive overview</div>
<div class="t" style="left:235.0px;top:67.0px;font-size:14.25px;line-height:14.25px;font-weight:400;color:#383838;transform:scaleX(0.9697);-webkit-text-stroke:0.25px #383838">Dashboard Options</div>
<div class="t" style="left:409.9px;top:67.0px;font-size:14.0px;line-height:14.0px;font-weight:400;color:#383838;transform:scaleX(0.9845);-webkit-text-stroke:0.25px #383838">Shared Dashboard</div>
<div class="t" style="left:838.7px;top:68.0px;font-size:13.75px;line-height:13.75px;font-weight:700;color:#ffffff;transform:scaleX(0.92)">Add Report</div>
<div class="t" style="left:973.8px;top:67.0px;font-size:14.0px;line-height:14.0px;font-weight:400;color:#383838;transform:scaleX(0.9682);-webkit-text-stroke:0.25px #383838">Bulk Edit Reports</div>
<div class="t" style="left:1108.6px;top:68.0px;font-size:13.75px;line-height:13.75px;font-weight:400;color:#383838;transform:scaleX(0.9738);-webkit-text-stroke:0.25px #383838">Raw Data Export</div>
<div class="t" style="left:36.6px;top:123.7px;font-size:16.75px;line-height:16.75px;font-weight:700;color:#222222;transform:scaleX(0.9524);-webkit-text-stroke:0.25px #f9f9f9">Revenue (past 30 days)</div>
<div class="t" style="left:729.7px;top:123.7px;font-size:16.75px;line-height:16.75px;font-weight:700;color:#222222;transform:scaleX(0.9401);-webkit-text-stroke:0.25px #f9f9f9">Revenue (all time)</div>
<div class="t" style="left:36.8px;top:222.7px;font-size:16.75px;line-height:16.75px;font-weight:700;color:#222222;transform:scaleX(0.9441);-webkit-text-stroke:0.25px #f9f9f9">Revenue by day</div>
<div class="t" style="left:730.1px;top:222.7px;font-size:16.75px;line-height:16.75px;font-weight:700;color:#222222;transform:scaleX(0.9466);-webkit-text-stroke:0.25px #f9f9f9">Revenue by month</div>
<div class="t" style="left:37.9px;top:518.7px;font-size:16.5px;line-height:16.5px;font-weight:700;color:#222222;transform:scaleX(0.9683);-webkit-text-stroke:0.25px #f9f9f9">Orders (past 30 days)</div>
<div class="t" style="left:730.4px;top:518.7px;font-size:16.5px;line-height:16.5px;font-weight:700;color:#222222;transform:scaleX(0.9576);-webkit-text-stroke:0.25px #f9f9f9">Orders (all time)</div>
<div class="t" style="left:37.6px;top:616.8px;font-size:16.5px;line-height:16.5px;font-weight:700;color:#222222;transform:scaleX(0.95)">Orders by day</div>
<div class="t" style="left:731.0px;top:616.8px;font-size:16.5px;line-height:16.5px;font-weight:700;color:#222222;transform:scaleX(0.95)">Orders by month</div>
<div class="t" style="left:39.5px;top:158.8px;font-size:31.75px;line-height:31.75px;font-weight:400;color:#222222;transform:scaleX(0.8664);-webkit-text-stroke:0.9px #fdfdfd">$197.9k</div>
<div class="t" style="left:732.6px;top:158.8px;font-size:31.5px;line-height:31.5px;font-weight:400;color:#222222;transform:scaleX(0.8637);-webkit-text-stroke:0.9px #fdfdfd">$1,549,190</div>
<div class="t" style="left:38.3px;top:551.5px;font-size:38.0px;line-height:38.0px;font-weight:400;color:#222222;transform:scaleX(0.977);-webkit-text-stroke:0.9px #fdfdfd">387</div>
<div class="t" style="left:730.9px;top:554.0px;font-size:32.25px;line-height:32.25px;font-weight:400;color:#222222;transform:scaleX(1.0013);-webkit-text-stroke:0.9px #fdfdfd">3,000</div>
</body></html>
